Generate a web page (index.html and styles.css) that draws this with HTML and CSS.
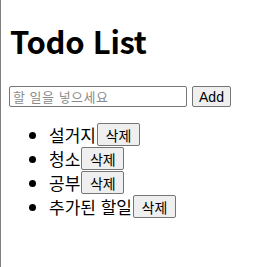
FILE: index.html
```html
<!DOCTYPE html>
<html lang="ko">
<head>
    <meta charset="UTF-8">
    <meta name="viewport" content="width=device-width, initial-scale=1.0">
    <title>Todo List</title>
    <link rel="stylesheet" href="styles.css">
</head>
<body>
    <h1>Todo List</h1>
    <div class="add_row">
        <input type="text" class="todo_input" placeholder="할 일을 넣으세요">
        <button class="add_button">Add</button>
    </div>
    <ul class="todo_list">
        <li>설거지<button class="del_button">삭제</button></li>
        <li>청소<button class="del_button">삭제</button></li>
        <li>공부<button class="del_button">삭제</button></li>
        <li>추가된 할일<button class="del_button">삭제</button></li>
    </ul>
</body>
</html>
```

FILE: styles.css
```css
html{
    border-left: 1px solid #808080;
    min-height: 100%;
}
body{
    margin: 8px;
    font-family: "Noto Sans CJK KR", sans-serif;
    font-size: 16px;
    color: #000;
}
h1{
    font-family: "Noto Sans CJK KR", sans-serif;
    font-size: 31px;
    letter-spacing: -0.3px;
    font-weight: bold;
    margin: 14px 0 27px 1px;
    line-height: 37px;
    height: 37px;
}
.add_row{
    display: flex;
    align-items: center;
    height: 21px;
}
.todo_input{
    width: 178px;
    height: 21px;
    box-sizing: border-box;
    border: 1px solid #767676;
    border-radius: 2px;
    padding: 1px 3px;
    font-family: "Noto Sans CJK KR", sans-serif;
    font-size: 13px;
    letter-spacing: 0.5px;
    margin: 0;
}
.todo_input::placeholder{
    color: #8a8a8a;
}
.add_button{
    margin-left: 5px;
    height: 21px;
    width: 39px;
    padding: 0;
    font-family: "Liberation Sans", sans-serif;
    font-size: 14px;
    color: #000;
    border: 1px solid #767676;
    border-radius: 2px;
    background-color: #efefef;
}
.todo_list{
    margin: 16px 0;
    padding-left: 40px;
}
.todo_list li{
    font-size: 17px;
    line-height: 23px;
    height: 24px;
}
.del_button{
    height: 23px;
    width: 43px;
    padding: 0;
    margin-left: 1px;
    font-family: "Noto Sans CJK KR", sans-serif;
    font-size: 14px;
    font-weight: normal;
    color: #000;
    border: 1px solid #767676;
    border-radius: 2px;
    background-color: #efefef;
    vertical-align: top;
}
```
